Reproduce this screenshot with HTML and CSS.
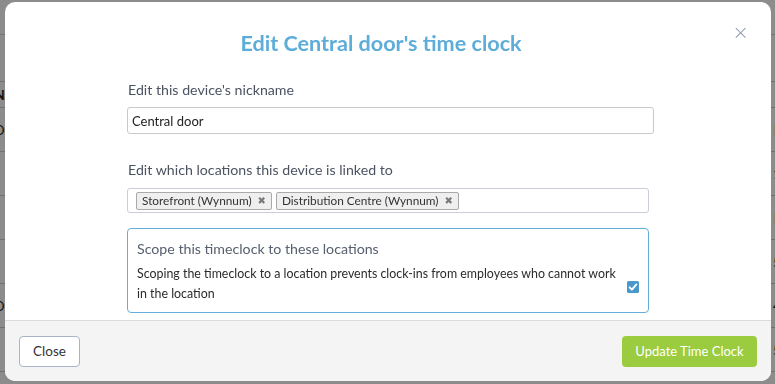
FILE: index.html
```html
<!DOCTYPE html>
<html lang="en">

<head>
    <meta charset="UTF-8">
    <meta name="viewport" content="width=device-width, initial-scale=1.0">
    <title>Edit time clock</title>
    <link rel="stylesheet" href="styles.css">
</head>

<body>
    <!-- page behind the modal -->
    <div class="page">
        <div class="page-top"><a href="#">Time clocks</a></div>
        <div class="page-band"></div>
        <div class="page-row page-head"><span>Name</span><span>I</span></div>
        <div class="page-row"><span>Door</span><span>L</span></div>
        <div class="page-row"><span></span><span>1</span></div>
        <div class="page-row"><span></span><span>L</span></div>
        <div class="page-row"><span></span><span>5</span></div>
        <div class="page-row"><span>D</span><span>4</span></div>
        <div class="page-row"><span></span><span>5</span></div>
    </div>

    <div class="backdrop"></div>

    <!-- edit modal -->
    <div class="modal">
        <button class="modal-x" type="button">&times;</button>

        <div class="modal-body">
            <h2 class="modal-title">Edit Central door's time clock</h2>

            <div class="form">
                <label class="field-label" for="nickname">Edit this device's nickname</label>
                <input class="text-input" type="text" id="nickname" value="Central door">

                <label class="field-label field-label-2">Edit which locations this device is linked to</label>
                <div class="multi">
                    <span class="tag">Storefront (Wynnum) <span class="tag-x">&#10006;</span></span>
                    <span class="tag">Distribution Centre (Wynnum) <span class="tag-x">&#10006;</span></span>
                </div>

                <div class="scope">
                    <div class="scope-title">Scope this timeclock to these locations</div>
                    <div class="scope-row">
                        <p class="scope-text">Scoping the timeclock to a location prevents clock-ins from employees who cannot work in the location</p>
                        <span class="check">
                            <svg width="12" height="12" viewBox="0 0 12 12">
                                <rect width="12" height="12" rx="1.5" fill="#4a97cb" />
                                <path d="M2.6 6.3 L4.9 8.6 L9.4 3.4" stroke="#fff" stroke-width="1.9" fill="none" stroke-linecap="round" stroke-linejoin="round" />
                            </svg>
                        </span>
                    </div>
                </div>
            </div>
        </div>

        <div class="modal-footer">
            <button class="btn btn-close" type="button">Close</button>
            <button class="btn btn-update" type="button">Update Time Clock</button>
        </div>
    </div>
</body>

</html>
```

FILE: styles.css
```css
body {
    margin: 0;
    font-family: Lato, 'Open Sans', sans-serif;
    background: #fff;
    height: 384px;
    overflow: hidden;
}

.page {
    color: #222;
    font-size: 14px;
}

.page-top {
    height: 35px;
    padding-top: 9px;
    box-sizing: border-box;
    border-bottom: 1px solid #d4d4d4;
    font-size: 13px;
}

.page-top a {
    color: #555;
    margin-left: -68px;
}

.page-band {
    height: 47px;
    background: #fdfdfd;
    border-bottom: 1px solid #ccc;
    box-sizing: border-box;
}

.page-row {
    display: flex;
    justify-content: space-between;
    align-items: center;
    height: 44px;
    border-bottom: 1px solid #ccc;
    box-sizing: border-box;
    margin: 0 -6px;
}

.page-head {
    height: 26px;
    font-weight: 700;
}

.backdrop {
    position: fixed;
    inset: 0;
    background: rgba(0, 0, 0, 0.45);
}

.modal {
    position: fixed;
    top: 2px;
    left: 5px;
    width: 766px;
    height: 379px;
    background: #fff;
    border-radius: 10px;
    overflow: hidden;
    display: flex;
    flex-direction: column;
}

.modal-x {
    position: absolute;
    top: 20px;
    right: 22px;
    border: none;
    background: none;
    color: #8d9bb0;
    font-size: 20px;
    font-weight: 300;
    padding: 0;
    line-height: 20px;
    font-family: 'DejaVu Sans', sans-serif;
    cursor: pointer;
}

.modal-body {
    flex: 1;
    padding-top: 29px;
}

.modal-title {
    margin: 0;
    text-align: center;
    font-size: 21.6px;
    line-height: 24px;
    font-weight: 700;
    color: #5eadd9;
    padding-right: 14px;
}

.form {
    width: 527px;
    margin-left: 122px;
    margin-top: 25px;
    display: flex;
    flex-direction: column;
}

.field-label {
    font-size: 14.2px;
    line-height: 20px;
    color: #4b5361;
    margin-bottom: 7px;
    padding-left: 1px;
}

.field-label-2 {
    margin-top: 26px;
    margin-bottom: 8px;
}

.text-input {
    height: 27px;
    box-sizing: border-box;
    border: 1px solid #c9c9c9;
    border-radius: 3px;
    padding: 0 4px;
    font-family: Lato, sans-serif;
    font-size: 13px;
    color: #222;
    outline: none;
}

.multi {
    width: 522px;
    height: 25px;
    box-sizing: border-box;
    border: 1px solid #c9ced8;
    border-radius: 3px;
    display: flex;
    align-items: center;
    gap: 4px;
    padding-left: 8px;
}

.tag {
    display: inline-flex;
    align-items: center;
    height: 18px;
    box-sizing: border-box;
    background: #efefef;
    border: 1px solid #aaa;
    border-radius: 2px;
    padding: 0 5px;
    font-size: 11.8px;
    color: #333;
}

.tag-x {
    color: #7a7a7a;
    font-size: 10px;
    font-family: 'DejaVu Sans', sans-serif;
    margin-left: 6px;
}

.scope {
    width: 522px;
    height: 85px;
    box-sizing: border-box;
    margin-top: 15px;
    border: 1px solid #63afdc;
    border-radius: 4px;
    padding: 10px 9px 0 9px;
}

.scope-title {
    font-size: 14.2px;
    line-height: 20px;
    color: #56606e;
}

.scope-row {
    display: flex;
    align-items: center;
    margin-top: 5px;
}

.scope-text {
    margin: 0;
    width: 488px;
    font-size: 12.4px;
    line-height: 20px;
    color: #2b2b2b;
}

.check {
    margin-left: 2px;
    margin-top: 5px;
    display: flex;
}

.modal-footer {
    height: 60px;
    background: #f4f4f4;
    border-top: 1px solid #dcdcdc;
    display: flex;
    justify-content: space-between;
    align-items: center;
    padding: 0 14px;
}

.btn {
    height: 31px;
    border-radius: 4px;
    font-family: Lato, sans-serif;
    font-size: 13.5px;
    cursor: pointer;
}

.btn-close {
    width: 61px;
    background: #fff;
    border: 1px solid #a9b4c6;
    color: #333;
}

.btn-update {
    width: 135px;
    background: #9bcc3f;
    border: none;
    color: #fff;
    font-size: 13px;
}
```
